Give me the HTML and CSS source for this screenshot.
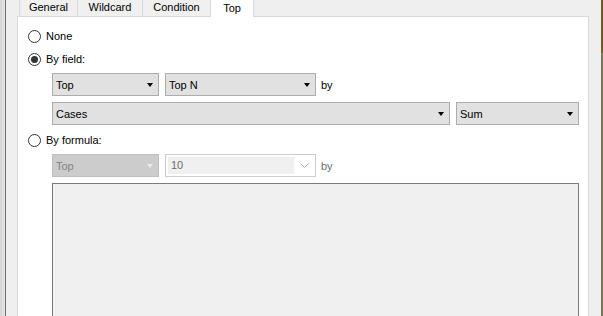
FILE: index.html
```html
<!DOCTYPE html>
<html>
<head>
<meta charset="utf-8">
<link rel="stylesheet" href="styles.css">
</head>
<body>
<div class="window">
  <div class="shade"></div>
  <div class="edge"></div>
  <div class="gutter-l"></div>
  <div class="main">
    <div class="tabs">
      <div class="tab tab-general">General</div>
      <div class="tab tab-wildcard">Wildcard</div>
      <div class="tab tab-condition">Condition</div>
      <div class="tab tab-top selected">Top</div>
    </div>
    <div class="panel">
      <label class="radio-row row-none"><span class="radio"></span><span>None</span></label>
      <label class="radio-row row-field"><span class="radio checked"></span><span>By field:</span></label>
      <div class="combo-row row1">
        <div class="combo w-top"><span>Top</span><span class="arrow"></span></div>
        <div class="combo w-topn"><span>Top N</span><span class="arrow"></span></div>
        <span class="by">by</span>
      </div>
      <div class="combo-row row2">
        <div class="combo w-cases"><span>Cases</span><span class="arrow"></span></div>
        <div class="combo w-sum"><span>Sum</span><span class="arrow"></span></div>
      </div>
      <label class="radio-row row-formula"><span class="radio"></span><span>By formula:</span></label>
      <div class="combo-row row3">
        <div class="combo disabled w-top"><span>Top</span><span class="arrow"></span></div>
        <div class="edit-combo w-topn">
          <div class="edit-field">10</div>
          <svg class="chev" width="9" height="6" viewBox="0 0 9 6"><polyline points="0.5,0.5 4.5,4.5 8.5,0.5" fill="none" stroke="#a8a8a8" stroke-width="1"/></svg>
        </div>
        <span class="by muted">by</span>
      </div>
      <div class="formula-box"></div>
    </div>
  </div>
  <div class="gutter-r"></div>
  <div class="olive"></div>
</div>
</body>
</html>
```

FILE: styles.css
```css
html, body {
  margin: 0;
  padding: 0;
}
body {
  background: #efefef;
  font-family: "Liberation Sans", Arial, sans-serif;
  font-size: 11px;
  color: #000;
}
.window {
  display: flex;
  width: 603px;
  height: 316px;
  overflow: hidden;
  background: #efefef;
}
.shade {
  width: 5px;
  background: linear-gradient(to right, #d6d6d6, #e6e6e6);
}
.edge {
  width: 1px;
  background: #6e6e6e;
}
.gutter-l {
  width: 11px;
  background: #efefef;
}
.main {
  width: 572px;
  display: flex;
  flex-direction: column;
}
.tabs {
  display: flex;
  align-items: flex-end;
  height: 16px;
  margin-left: 2px;
}
.tab {
  box-sizing: border-box;
  height: 16px;
  line-height: 15px;
  text-align: center;
  background: #f0f0f0;
  border-right: 1px solid #d9d9d9;
}
.tab-general { width: 59px; border-left: 1px solid #d9d9d9; }
.tab-wildcard { width: 65px; }
.tab-condition { width: 68px; }
.tab-top { width: 43px; }
.tab.selected {
  height: 17px;
  background: #fff;
  border-left: 1px solid #d9d9d9;
  margin-left: -1px;
  width: 44px;
  margin-bottom: -1px;
  position: relative;
  z-index: 1;
  line-height: 16px;
}
.panel {
  flex: 1;
  background: #fff;
  border: 1px solid #d9d9d9;
  padding: 11px 0 0 10px;
  display: flex;
  flex-direction: column;
}
.radio-row {
  display: flex;
  align-items: center;
  height: 16px;
  gap: 5px;
}
.row-field { margin-top: 7px; }
.row-formula { margin-top: 7px; }
.radio {
  box-sizing: border-box;
  width: 13px;
  height: 13px;
  border: 1px solid #333;
  border-radius: 50%;
  background: #fff;
  display: flex;
  align-items: center;
  justify-content: center;
}
.radio.checked::after {
  content: "";
  width: 7px;
  height: 7px;
  border-radius: 50%;
  background: #333;
}
.combo-row {
  display: flex;
  align-items: center;
  gap: 6px;
  margin-left: 24px;
  height: 23px;
}
.row1 { margin-top: 6px; }
.row2 { margin-top: 6px; }
.row3 { margin-top: 6px; }
.combo {
  box-sizing: border-box;
  height: 23px;
  border: 1px solid #adadad;
  background: #e1e1e1;
  display: flex;
  align-items: center;
  justify-content: space-between;
  padding: 0 5px 0 3px;
}
.arrow {
  width: 0;
  height: 0;
  border-left: 3.5px solid transparent;
  border-right: 3.5px solid transparent;
  border-top: 4px solid #000;
}
.w-top { width: 107px; }
.w-topn { width: 151px; }
.w-cases { width: 398px; }
.w-sum { width: 123px; }
.by {
  margin-left: -1px;
}
.by.muted { color: #6d6d6d; }
.combo.disabled {
  background: #cccccc;
  border-color: #bfbfbf;
  color: #838383;
}
.combo.disabled .arrow {
  border-top-color: #ececec;
}
.edit-combo {
  box-sizing: border-box;
  height: 23px;
  border: 1px solid #cccccc;
  background: #fff;
  display: flex;
  align-items: center;
  padding: 0 6px 0 2px;
  gap: 6px;
}
.edit-field {
  flex: 1;
  height: 17px;
  line-height: 17px;
  background: #f0f0f0;
  color: #6d6d6d;
  padding-left: 3px;
}
.chev { display: block; }
.formula-box {
  margin-top: 6px;
  margin-left: 24px;
  width: 527px;
  height: 200px;
  box-sizing: border-box;
  border: 1px solid #7a7a7a;
  background: #f0f0f0;
}
.gutter-r {
  width: 12px;
  background: #efefef;
}
.olive {
  width: 2px;
  background: linear-gradient(to bottom, #6e5c2a 0, #6e5c2a 53px, #7d7560 53px, #7d7560 100%);
}
```
